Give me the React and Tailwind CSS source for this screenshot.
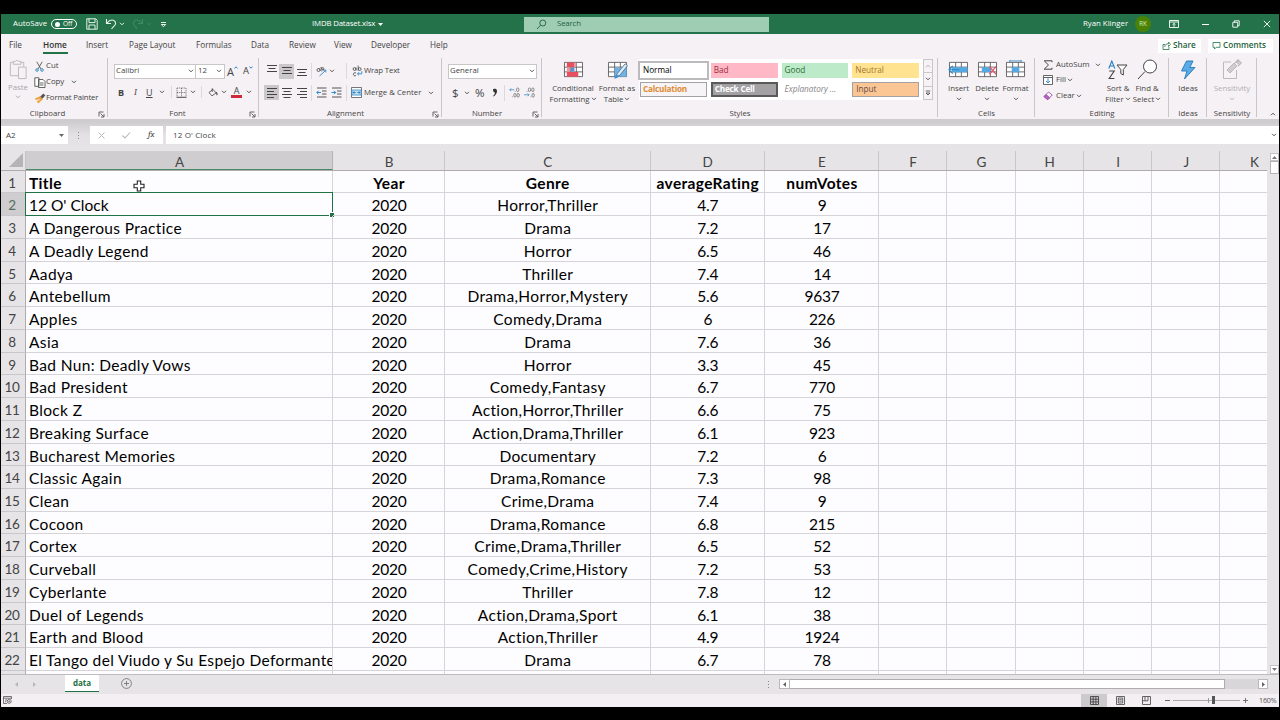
import React from 'react';

const ROWS = [
  ["12 O' Clock", 'Horror,Thriller', '4.7', '9'],
  ['A Dangerous Practice', 'Drama', '7.2', '17'],
  ['A Deadly Legend', 'Horror', '6.5', '46'],
  ['Aadya', 'Thriller', '7.4', '14'],
  ['Antebellum', 'Drama,Horror,Mystery', '5.6', '9637'],
  ['Apples', 'Comedy,Drama', '6', '226'],
  ['Asia', 'Drama', '7.6', '36'],
  ['Bad Nun: Deadly Vows', 'Horror', '3.3', '45'],
  ['Bad President', 'Comedy,Fantasy', '6.7', '770'],
  ['Block Z', 'Action,Horror,Thriller', '6.6', '75'],
  ['Breaking Surface', 'Action,Drama,Thriller', '6.1', '923'],
  ['Bucharest Memories', 'Documentary', '7.2', '6'],
  ['Classic Again', 'Drama,Romance', '7.3', '98'],
  ['Clean', 'Crime,Drama', '7.4', '9'],
  ['Cocoon', 'Drama,Romance', '6.8', '215'],
  ['Cortex', 'Crime,Drama,Thriller', '6.5', '52'],
  ['Curveball', 'Comedy,Crime,History', '7.2', '53'],
  ['Cyberlante', 'Thriller', '7.8', '12'],
  ['Duel of Legends', 'Action,Drama,Sport', '6.1', '38'],
  ['Earth and Blood', 'Action,Thriller', '4.9', '1924'],
  ['El Tango del Viudo y Su Espejo Deformante', 'Drama', '6.7', '78'],
];

const COLUMNS = ['A', 'B', 'C', 'D', 'E', 'F', 'G', 'H', 'I', 'J', 'K'];

// Row header + columns A..K, shared by the header and every row
const GRID = 'grid grid-rows-[minmax(0,1fr)] grid-cols-[25px_307px_112px_205.5px_114.5px_114px_68.3px_68.3px_68.3px_68.3px_68.2px_68px]';

const MENU = [
  { title: 'File', width: 'w-[34px]' },
  { title: 'Home', width: 'w-[43px]', active: true },
  { title: 'Insert', width: 'w-[43px]' },
  { title: 'Page Layout', width: 'w-[67px]' },
  { title: 'Formulas', width: 'w-[55px]' },
  { title: 'Data', width: 'w-[38px]' },
  { title: 'Review', width: 'w-[45px]' },
  { title: 'View', width: 'w-[37px]' },
  { title: 'Developer', width: 'w-[59px]' },
  { title: 'Help', width: 'w-[30px]' },
];

// --- Small shared drawings ---
const Chevron = ({ className = '' }) => (
  <svg viewBox="0 0 6 4" className={`h-[4px] w-[6px] shrink-0 ${className}`} fill="none" stroke="currentColor" strokeWidth="0.9">
    <path d="M1 0.8 3 2.8 5 0.8" />
  </svg>
);

const Launcher = () => (
  <svg viewBox="0 0 7 7" className="h-[7px] w-[7px]" fill="none" stroke="#555" strokeWidth="0.9">
    <path d="M1 5.5V1h4.5M2.6 2.6 5.8 5.8M6 3v3H3" />
  </svg>
);

const Group = ({ label, width, labelPad = '', launcher, border = true, children }) => (
  <div className={`relative flex h-full shrink-0 flex-col ${width}`}>
    <div className="h-[51px]">{children}</div>
    <div className={`flex h-[11px] items-center justify-center leading-none ${labelPad}`}>{label}</div>
    {launcher && <div className="absolute right-[3px] bottom-[1px]"><Launcher /></div>}
    {border && <div className="absolute top-[1px] right-0 h-[59px] w-px bg-[#c9c6c9]" />}
  </div>
);

const BigButton = ({ icon, first, second, width, className = '', arrow }) => (
  <div className={`flex shrink-0 flex-col items-center leading-[10.5px] whitespace-nowrap ${width} ${className}`}>
    <div className="flex h-[25px] items-center justify-center">{icon}</div>
    <div className="mt-[1px]">{first}</div>
    <div className="flex h-[10.5px] items-center gap-[1px]">{second}{arrow && <Chevron />}</div>
  </div>
);

const Lines = ({ xs, top = 0 }) => (
  <svg viewBox="0 0 12 12" className="h-[12px] w-[12px]" stroke="#444" strokeWidth="1">
    {xs.map(([a, b], i) => <path key={i} d={`M${a} ${top + 1.5 + i * 3}H${b}`} />)}
  </svg>
);

const TableIcon = ({ children }) => (
  <svg viewBox="0 0 22 20" className="h-[19px] w-[21px]" fill="none">
    <path d="M1.5 2.5h19v15h-19zM1.5 7.5h19M1.5 12.5h19M8 2.5v15M14 2.5v15" fill="#fff" stroke="#555" strokeWidth="0.9" />
    {children}
  </svg>
);

// --- Title bar ---
const TitleBar = () => (
  <div className="flex h-[20px] items-center bg-[#247249] text-[7.8px] text-white">
    <div className="ml-[12px] w-[38px]">AutoSave</div>
    <div className="flex h-[10px] w-[26px] items-center rounded-full border border-white pl-[3px] text-[6.5px] leading-none">
      <span className="mr-[3px] h-[5px] w-[5px] rounded-full bg-white" />Off
    </div>
    <svg viewBox="0 0 12 12" className="ml-[9px] h-[12px] w-[12px]" fill="none" stroke="#e4f2ea" strokeWidth="1">
      <path d="M.8.8h8.9l1.5 1.5v8.9H.8zM3 .8v3.8h6V.8M3 11V7h6v4" />
    </svg>
    <svg viewBox="0 0 12 12" className="ml-[7px] h-[12px] w-[12px]" fill="none" stroke="#e4f2ea" strokeWidth="1.1">
      <path d="M1.5 1v4.5H6M1.8 5.2C4 2.5 6 1.6 8.2 2.2c3.5 1.2 2.7 4.6.6 6.2L6.5 10.8" />
    </svg>
    <Chevron className="ml-[2px]" />
    <svg viewBox="0 0 12 12" className="ml-[7px] h-[12px] w-[12px]" fill="none" stroke="#3f8a62" strokeWidth="1.1">
      <path d="M10.5 1v4.5H6M10.2 5.2C8 2.5 6 1.6 3.8 2.2.3 3.4 1.1 6.800 3.2 8.400L5 10.800" />
    </svg>
    <Chevron className="ml-[2px] text-[#3f8a62]" />
    <svg viewBox="0 0 7 7" className="ml-[8px] h-[7px] w-[7px]" fill="none" stroke="#fff" strokeWidth="0.9">
      <path d="M1 1.5h5M1.3 3.5 3.5 5.7 5.7 3.5z" />
    </svg>
    <div className="ml-[145px] w-[66px] tracking-[-0.15px] whitespace-nowrap">IMDB Dataset.xlsx</div>
    <svg viewBox="0 0 5 3" className="h-[3px] w-[5px]" fill="#fff"><path d="M0 0h5L2.5 3z" /></svg>
    <div className="ml-[141px] flex h-[15px] w-[245px] items-center bg-[#9fcdb3] text-[#22613f]">
      <svg viewBox="0 0 11 11" className="ml-[12px] h-[11px] w-[11px]" fill="none" stroke="#22613f" strokeWidth="0.9">
        <circle cx="6.8" cy="4" r="3" /><path d="M4.6 6.2 1 10" />
      </svg>
      <span className="ml-[10px] tracking-[-0.15px]">Search</span>
    </div>
    <div className="ml-[314px] w-[52px] whitespace-nowrap">Ryan Klinger</div>
    <div className="flex h-[16px] w-[16px] items-center justify-center rounded-full bg-[#498205] text-[6.5px] text-[#d5e8b4]">RK</div>
    <svg viewBox="0 0 10 8" className="ml-[18px] h-[8px] w-[10px]" fill="none" stroke="#fff" strokeWidth="0.9">
      <path d="M.5.5h9v7h-9zM.5 2h9M5 6.8V3.5M3.5 4.8 5 3.4l1.5 1.4" />
    </svg>
    <div className="ml-[23px] h-px w-[7px] bg-white" />
    <svg viewBox="0 0 8 8" className="ml-[23px] h-[8px] w-[8px]" fill="none" stroke="#fff" strokeWidth="0.9">
      <path d="M.8 2.3h4.9v4.9H.8zM2.3 2.3V.8h4.9v4.9H5.7" />
    </svg>
    <svg viewBox="0 0 8 8" className="ml-[23px] h-[8px] w-[8px]" stroke="#fff" strokeWidth="0.9">
      <path d="m.8.8 6.4 6.4M7.2.8.8 7.2" />
    </svg>
  </div>
);

// --- Menu tabs ---
const MenuBar = () => (
  <div className="flex h-[23px] items-center text-[8.2px] text-[#444]">
    <div className="flex pl-[8px]">
      {MENU.map((item) => (
        <div key={item.title} className={`relative flex shrink-0 justify-start whitespace-nowrap ${item.width}`}>
          <span className={item.active ? 'font-semibold text-[#333]' : ''}>{item.title}</span>
          {item.active && <span className="absolute bottom-[-2px] left-0 h-[2px] w-[25px] bg-[#217346]" />}
        </div>
      ))}
    </div>
    <div className="ml-auto flex h-[14px] w-[43px] items-center gap-[2px] bg-white pl-[4px] font-semibold text-[#1f5f3c]">
      <svg viewBox="0 0 9 9" className="h-[9px] w-[9px]" fill="none" stroke="#217346" strokeWidth="0.8">
        <path d="M3 3.5H1v5h6V6M2.8 6c0-2.3 1.4-3.2 3.7-3.2V1l2 2.3-2 2.2V4" />
      </svg>
      Share
    </div>
    <div className="mr-[6px] ml-[7px] flex h-[14px] w-[65px] items-center gap-[2px] bg-white pl-[4px] font-semibold text-[#1f5f3c]">
      <svg viewBox="0 0 9 9" className="h-[9px] w-[9px]" fill="none" stroke="#217346" strokeWidth="0.8">
        <path d="M1 1.5h7v4.8H4.2L2.5 8V6.3H1z" />
      </svg>
      Comments
    </div>
  </div>
);

const ClipboardGroup = () => (
  <Group label="Clipboard" width="w-[107px]" labelPad="pr-[14px]" launcher>
    <div className="flex">
      <div className="mt-[2px] ml-[3px] flex w-[28px] shrink-0 flex-col items-center text-[#a9a6a9]">
        <svg viewBox="0 0 20 22" className="h-[21px] w-[20px]" fill="none" stroke="#bcb8bc" strokeWidth="1">
          <path d="M5 3.5H2v14h8M13 3.5h3V8M5 2.5h2.5a1.6 1.6 0 0 1 3 0H13v3H5zM10.5 8.5h8v12h-8z" />
        </svg>
        <span className="mt-[2px] leading-[11px]">Paste</span>
        <Chevron className="mt-[2px]" />
      </div>
      <div className="mt-[1px] ml-[2px] flex shrink-0 flex-col">
        <div className="flex h-[16px] items-center">
          <svg viewBox="0 0 9 11" className="ml-[1px] h-[11px] w-[9px]" fill="none" stroke="#555" strokeWidth="0.9">
            <path d="M1.8.8 6 8M7.2.8 3 8" /><circle cx="2" cy="9" r="1.3" stroke="#2b88c8" /><circle cx="7" cy="9" r="1.3" stroke="#2b88c8" />
          </svg>
          <span className="ml-[2px]">Cut</span>
        </div>
        <div className="flex h-[16px] items-center">
          <svg viewBox="0 0 12 11" className="h-[11px] w-[12px]" fill="#fff" stroke="#555" strokeWidth="0.9">
            <path d="M.8.8H5v8.5H.8zM4.5 2.5H9l2 2v6H4.5zM6 6h3.5M6 8h3.5" />
          </svg>
          <span className="w-[25px]">Copy</span><Chevron />
        </div>
        <div className="flex h-[16px] items-center">
          <svg viewBox="0 0 12 11" className="h-[11px] w-[12px]" fill="none">
            <path d="M.8 5.5 6.5 3l2.3 3.2-4.5 4.3z" fill="#eda445" /><path d="m6.3 3.6 3-3 2 2-3 3.2z" fill="#555" /><path d="m2 7.5 3.5-.8" stroke="#fff" />
          </svg>
          <span className="tracking-[-0.15px] whitespace-nowrap">Format Painter</span>
        </div>
      </div>
    </div>
  </Group>
);

const FontGroup = () => (
  <Group label="Font" width="w-[151px]" labelPad="pr-[12px]" launcher>
    <div className="flex h-[28px] items-center pl-[6px]">
      <div className="flex h-[15px] w-[82px] items-center justify-between border border-[#c8c6c8] bg-white px-[1px]">Calibri<Chevron /></div>
      <div className="flex h-[15px] w-[29px] items-center justify-between border border-l-0 border-[#c8c6c8] bg-white px-[2px]">12<Chevron /></div>
      <span className="ml-[2px] text-[11px] leading-none">A</span>
      <svg viewBox="0 0 4 3" className="mb-[7px] h-[3px] w-[4px]" fill="none" stroke="#2b88c8"><path d="M.4 2.5 2 .8l1.6 1.7" /></svg>
      <span className="ml-[5px] text-[9.5px] leading-none">A</span>
      <svg viewBox="0 0 4 3" className="mb-[7px] h-[3px] w-[4px]" fill="none" stroke="#2b88c8"><path d="M.4.5 2 2.2 3.6.5" /></svg>
    </div>
    <div className="flex h-[14px] items-center pl-[10px] text-[9px] leading-none">
      <b className="w-[15px] shrink-0">B</b>
      <i className="w-[13px] shrink-0 pl-px font-serif">I</i>
      <u className="w-[13px] shrink-0">U</u>
      <Chevron />
      <div className="ml-[6px] h-[12px] w-px bg-[#dcd9dc]" />
      <svg viewBox="0 0 11 11" className="ml-[4px] h-[11px] w-[11px] shrink-0" stroke="#555" strokeWidth="0.8" fill="none">
        <path d="M1 1h9M1 1v9M10 1v9M5.5 1v9M1 5.5h9" strokeDasharray="1.2 1" /><path d="M.5 10.3h10" strokeWidth="1.1" />
      </svg>
      <Chevron className="ml-[3px]" />
      <div className="ml-[5px] h-[12px] w-px bg-[#dcd9dc]" />
      <svg viewBox="0 0 10 11" className="ml-[6px] h-[11px] w-[10px] shrink-0" fill="none" stroke="#555" strokeWidth="0.9">
        <path d="m1 5.5 4-3.2 3 3.6-4 3zM4.2 5V1.2" /><path d="M8.2 5.2c1 1.6 1 2.5.3 2.8" strokeWidth="1.3" />
      </svg>
      <Chevron className="ml-[3px]" />
      <div className="ml-[4px] flex w-[11px] shrink-0 flex-col items-center leading-[9px]">A<span className="h-[2.5px] w-full bg-[#d1273a]" /></div>
      <Chevron className="ml-[4px]" />
    </div>
  </Group>
);

const Divider = ({ className }) => <div className={`h-[16px] w-px shrink-0 bg-[#dcd9dc] ${className}`} />;

const AlignmentGroup = () => (
  <Group label="Alignment" width="w-[183px]" labelPad="pr-[10px]" launcher>
    <div className="flex h-[28px] items-center pl-[5px]">
      <div className="flex h-[15px] w-[15px] items-center justify-center"><Lines top={-1} xs={[[1, 11], [2.5, 9.5], [1, 11]]} /></div>
      <div className="flex h-[15px] w-[15px] items-center justify-center bg-[#cbc8cb]"><Lines top={1} xs={[[1, 11], [2.5, 9.5], [1, 11]]} /></div>
      <div className="flex h-[15px] w-[15px] items-center justify-center"><Lines top={3} xs={[[1, 11], [2.5, 9.5], [1, 11]]} /></div>
      <Divider className="ml-[2px]" />
      <svg viewBox="0 0 11 11" className="ml-[4px] h-[11px] w-[11px]" fill="none" stroke="#555" strokeWidth="0.9">
        <circle cx="2.5" cy="4" r="1.5" /><path d="m2.5 2 3 3.4M4.5 1l3.2 3.5" /><circle cx="6.5" cy="2.8" r="1.3" /><path d="m3.5 10 6-5.5M7.5 4h2.3v2.4" stroke="#2b88c8" />
      </svg>
      <Chevron className="ml-[2px]" />
      <Divider className="ml-[11px]" />
      <svg viewBox="0 0 11 12" className="ml-[5px] h-[12px] w-[11px]" fill="none" stroke="#555" strokeWidth="0.9">
        <circle cx="2.5" cy="4" r="1.4" /><path d="M4 2.400v3.200M6.200.6v5" /><circle cx="7.700" cy="4.100" r="1.400" />
        <path d="M4 8a1.600 1.600 0 1 0 0 2.500" />
        <path d="M9.800 6.200v2.600H5.500M7 7.200 5.400 8.800 7 10.400" stroke="#2b88c8" />
      </svg>
      <span className="ml-[1px] tracking-[-0.15px] whitespace-nowrap">Wrap Text</span>
    </div>
    <div className="flex h-[15px] items-center pl-[5px]">
      <div className="flex h-[15px] w-[15px] items-center justify-center bg-[#cbc8cb]"><Lines xs={[[1, 11], [1, 8], [1, 11], [1, 8]]} /></div>
      <div className="flex h-[15px] w-[15px] items-center justify-center"><Lines xs={[[1, 11], [2.5, 9.5], [1, 11], [2.5, 9.5]]} /></div>
      <div className="flex h-[15px] w-[15px] items-center justify-center"><Lines xs={[[1, 11], [4, 11], [1, 11], [4, 11]]} /></div>
      <Divider className="ml-[2px]" />
      <svg viewBox="0 0 11 11" className="ml-[4px] h-[11px] w-[11px]" stroke="#555" fill="none">
        <path d="M1 1h9.5M6 4h4.5M6 7h4.5M1 10h9.5" /><path d="M5 5.5H.8M2.5 3.8.8 5.5l1.7 1.7" stroke="#2b88c8" />
      </svg>
      <svg viewBox="0 0 11 11" className="ml-[4px] h-[11px] w-[11px]" stroke="#555" fill="none">
        <path d="M1 1h9.5M6 4h4.5M6 7h4.5M1 10h9.5" /><path d="M.5 5.5h4.2M3 3.8l1.7 1.7L3 7.2" stroke="#2b88c8" />
      </svg>
      <Divider className="ml-[4px]" />
      <svg viewBox="0 0 11 11" className="ml-[4px] h-[11px] w-[11px]" fill="none" stroke="#555" strokeWidth="0.8">
        <path d="M.5.5h10v10H.5z" fill="#fff" /><path d="M.8 3h9.4v5H.8z" fill="#c4e1f3" stroke="#2b88c8" /><path d="M2 5.5h2.7M9 5.5H6.3M3.2 4.3 2 5.5l1.2 1.2M7.8 4.3 9 5.5 7.8 6.7" stroke="#1f6fa8" />
      </svg>
      <span className="ml-[2px] w-[64px] whitespace-nowrap">Merge & Center</span>
      <Chevron />
    </div>
  </Group>
);

const NumberGroup = () => (
  <Group label="Number" width="w-[100px]" labelPad="pr-[10px]" launcher>
    <div className="flex h-[28px] items-center pl-[6px]">
      <div className="flex h-[15px] w-[89px] shrink-0 items-center justify-between border border-[#c8c6c8] bg-white px-[1px]">General<Chevron /></div>
    </div>
    <div className="flex h-[15px] items-center pl-[10px] text-[11.5px] leading-none">
      <span className="w-[12px] shrink-0">$</span>
      <Chevron />
      <span className="ml-[5px] w-[17px] shrink-0">%</span>
      <svg viewBox="0 0 6 9" className="h-[9px] w-[6px] shrink-0" fill="#333"><path d="M1 1.8C1 .5 4.8.2 5 2.6c.2 2.6-1.5 5-3.5 6l-.4-.6C2.4 7 3 5.8 2.9 4.6 1.8 4.5 1 3.4 1 1.8z" /></svg>
      <Divider className="ml-[6px]" />
      <svg viewBox="0 0 12 12" className="ml-[4px] h-[11px] w-[11px] shrink-0" fill="none" stroke="#666" strokeWidth="0.8">
        <ellipse cx="9.500" cy="3" rx="1.300" ry="2" /><ellipse cx="6.500" cy="9" rx="1.300" ry="2" /><ellipse cx="10" cy="9" rx="1.300" ry="2" />
        <path d="M6.800 4.500v.8M3.700 10.300v.8" /><path d="M5.800 3H.8M2.300 1.500.8 3l1.500 1.500" stroke="#2b88c8" />
      </svg>
      <svg viewBox="0 0 12 12" className="ml-[4px] h-[11px] w-[11px] shrink-0" fill="none" stroke="#666" strokeWidth="0.8">
        <ellipse cx="6" cy="3" rx="1.300" ry="2" /><ellipse cx="9.700" cy="3" rx="1.300" ry="2" /><ellipse cx="10" cy="9" rx="1.300" ry="2" />
        <path d="M3.300 4.500v.8M7.500 10.300v.8" /><path d="M0 8.500h5.500M4 7l1.500 1.500L4 10" stroke="#2b88c8" />
      </svg>
    </div>
  </Group>
);

const STYLE_CELLS = [
  ['Normal', 'outline outline-2 outline-[#bcbabc] bg-white text-black'],
  ['Bad', 'bg-[#ffb9c6] text-[#9c2a3a]'],
  ['Good', 'bg-[#bdebca] text-[#2b6b33]'],
  ['Neutral', 'bg-[#ffe391] text-[#a5762c]'],
  ['Calculation', 'border border-[#a3a1a3] bg-[#f6f4f6] font-bold tracking-[-0.200px] text-[#e08a32] -indent-px'],
  ['Check Cell', 'border-2 border-[#5a5a5a] bg-[#a3a1a3] font-bold tracking-[-0.200px] text-white -indent-px'],
  ['Explanatory ...', 'italic text-[#868386]'],
  ['Input', 'border border-[#a3a1a3] bg-[#fcc594] text-[#5c504a]'],
];

const StylesGroup = () => (
  <Group label="Styles" width="w-[396px]">
    <div className="flex">
      <BigButton
        width="w-[44px]" className="ml-[9px]" first="Conditional" second="Formatting" arrow
        icon={
          <TableIcon>
            <path d="M4 2.500h8v5H4zM4 12.500h12v5H4z" fill="#e8505f" /><path d="M4 8h4v4H4zM12 3h2v4h-2z" fill="#f2929c" /><path d="M8 8h4v4H8z" fill="#5b8fd0" />
          </TableIcon>
        }
      />
      <BigButton
        width="w-[42px]" className="ml-[1px]" first="Format as" second="Table" arrow
        icon={
          <TableIcon>
            <path d="M8 8h12.5v9.500H8z" fill="#6db3ea" /><path d="m9 18 2-4 8-10 2.500 2-8 10z" fill="#dcebf7" stroke="#4d6478" strokeWidth="0.8" /><path d="M7.500 19.500c1-3 2.500-4.500 4.500-3.500.5 2-1.500 3.500-4.500 3.500z" fill="#3c93d6" />
          </TableIcon>
        }
      />
      <div className="mt-[2px] ml-[1px] grid h-[41px] w-[284px] shrink-0 grid-cols-4 content-start gap-[4px] bg-white pt-[4px] pr-[4px] pl-[1px]">
        {STYLE_CELLS.map(([name, style]) => (
          <div key={name} className={`flex h-[15px] items-center overflow-hidden text-[8.200px] whitespace-nowrap ${style}`}>
            <span className="pl-[3px]">{name}</span>
          </div>
        ))}
      </div>
      <div className="mt-[2px] flex h-[41px] w-[10px] shrink-0 flex-col divide-y divide-[#c8c6c8] border border-[#c8c6c8] bg-[#f6f2f5]">
        <div className="flex flex-1 items-center justify-center text-[#aaa]"><Chevron className="rotate-180" /></div>
        <div className="flex flex-1 items-center justify-center"><Chevron /></div>
        <div className="flex flex-1 items-center justify-center">
          <svg viewBox="0 0 6 6" className="h-[6px] w-[6px]" fill="none" stroke="#555" strokeWidth="0.9"><path d="M.8 1h4.400M1 3l2 2 2-2z" /></svg>
        </div>
      </div>
    </div>
  </Group>
);

const CellsGroup = () => (
  <Group label="Cells" width="w-[97px]">
    <div className="flex pl-[6px]">
      <BigButton width="w-[29px]" first="Insert" arrow
        icon={<TableIcon><path d="M4 7.500h16.500v5.500H4z" fill="#56a8e2" /><path d="M12 10.300H1M5 6.300l-4 4 4 4" stroke="#2b88c8" strokeWidth="1.200" /></TableIcon>} />
      <BigButton width="w-[28px]" first="Delete" arrow
        icon={<TableIcon><path d="M5 7.500h9v5.500H5z" fill="#56a8e2" /><path d="m13 7 7 8M20 7l-7 8" stroke="#e0566a" strokeWidth="1.300" /></TableIcon>} />
      <BigButton width="w-[29px]" first="Format" arrow
        icon={<TableIcon><path d="M7 7.500h8v5.500H7z" fill="#56a8e2" /><path d="M5 1h12M5 0v2M17 0v2" stroke="#2b88c8" strokeWidth="0.900" /></TableIcon>} />
    </div>
  </Group>
);

const EditingGroup = () => (
  <Group label="Editing" width="w-[134px]">
    <div className="flex pl-[8px]">
      <div className="flex w-[60px] shrink-0 flex-col">
        <div className="flex h-[15.500px] items-center">
          <svg viewBox="0 0 10 10" className="h-[10px] w-[10px]" fill="none" stroke="#444"><path d="M9 2.200V.8H1.200L5.500 5 1.200 9.200H9V7.800" /></svg>
          <span className="ml-[3px] w-[39px]">AutoSum</span><Chevron />
        </div>
        <div className="flex h-[15.500px] items-center">
          <svg viewBox="0 0 10 10" className="h-[10px] w-[10px]" fill="#fff" stroke="#555" strokeWidth="0.900"><path d="M.5.5h9v9h-9zM.5 2.500h9" /><path d="M5 3v5M3 6l2 2 2-2" fill="none" stroke="#2b88c8" /></svg>
          <span className="ml-[3px] w-[11px]">Fill</span><Chevron />
        </div>
        <div className="flex h-[15.500px] items-center">
          <svg viewBox="0 0 10 10" className="h-[10px] w-[10px]" fill="#fff" stroke="#a04cad" strokeWidth="0.900"><path d="m1 5.500 4.500-4.500 3.700 3L4.700 8.700z" /><path d="m1 5.500 2-2 3.700 3.200-2 2z" fill="#b563c2" /></svg>
          <span className="ml-[3px] w-[20px]">Clear</span><Chevron />
        </div>
      </div>
      <BigButton width="w-[28px]" first="Sort &" second="Filter" arrow className="ml-[1px]"
        icon={
          <svg viewBox="0 0 20 20" className="h-[20px] w-[20px]" fill="none">
            <path d="m.8 8.500 3-7.500 3 7.500M1.800 6h4" stroke="#2b7fc0" strokeWidth="1.100" />
            <path d="M1.200 11h5l-5 7.500h5.200" stroke="#444" strokeWidth="1.100" />
            <path d="M9 5h10l-3.700 4.500V15l-2.500-1.500V9.500z" stroke="#444" fill="#fff" />
          </svg>
        } />
      <BigButton width="w-[30px]" first="Find &" second="Select" arrow
        icon={
          <svg viewBox="0 0 21 21" className="h-[21px] w-[21px]" fill="#fff" stroke="#444" strokeWidth="1"><path d="M8 12.500 1 20" /><circle cx="13" cy="7.500" r="6.500" /></svg>
        } />
    </div>
  </Group>
);

const Ribbon = () => (
  <div className="flex h-[62px] text-[7.800px] leading-none text-[#444]">
    <ClipboardGroup />
    <FontGroup />
    <AlignmentGroup />
    <NumberGroup />
    <StylesGroup />
    <CellsGroup />
    <EditingGroup />
    <Group label="Ideas" width="w-[38px]">
      <BigButton width="w-full" first="Ideas"
        icon={<svg viewBox="0 0 16 20" className="h-[20px] w-[16px]" fill="#5aace6" stroke="#2576b5" strokeWidth="0.900"><path d="M6.500 1H13L9.800 7.500H15L4.500 19l2.500-8H1.500z" /></svg>} />
    </Group>
    <Group label="Sensitivity" width="w-[50px]">
      <BigButton width="w-full" className="text-[#b1aeb1]" first="Sensitivity" arrow
        icon={
          <svg viewBox="0 0 20 21" className="h-[21px] w-[20px]" fill="none" stroke="#bcb9bc">
            <path d="M9 3H1.500v16.500h13V11" /><path d="m5 11 7-7 3 3-7 7z" fill="#cfcccf" /><path d="m13 4 3-3 3 3-3 3M14.500 2.500l3 3" strokeWidth="1.500" />
          </svg>
        } />
    </Group>
    <div className="flex flex-1 items-end justify-end pr-[3px] pb-[3px]"><Chevron className="rotate-180" /></div>
  </div>
);

const FormulaBar = () => (
  <div className="flex h-[26px] items-center bg-gradient-to-b from-[#d0cdd0] via-[#e3e1e4] to-[#e6e4e7] text-[8px] text-[#444]">
    <div className="flex h-[18px] w-[67px] items-center justify-between bg-white pr-[4px] pl-[5px]">
      A2
      <svg viewBox="0 0 5 3" className="h-[3px] w-[5px]" fill="#666"><path d="M0 0h5L2.500 3z" /></svg>
    </div>
    <div className="ml-[10px] flex flex-col gap-[2px]">
      {[0, 1, 2].map((n) => <span key={n} className="h-px w-px bg-[#888]" />)}
    </div>
    <div className="ml-[11px] flex h-[18px] w-[73px] items-center bg-white">
      <svg viewBox="0 0 7 7" className="ml-[8px] h-[7px] w-[7px]" stroke="#b9b6b9" strokeWidth="1"><path d="m.5.500 6 6M6.500.500l-6 6" /></svg>
      <svg viewBox="0 0 9 7" className="ml-[17px] h-[7px] w-[9px]" fill="none" stroke="#b9b6b9" strokeWidth="1.100"><path d="m.500 3.500 2.500 2.500 5-5.500" /></svg>
      <span className="ml-[17px] font-serif text-[9px] italic">fx</span>
    </div>
    <div className="ml-[3px] flex h-[18px] flex-1 items-center justify-between bg-white pr-[2px] pl-[7px]">
      <span className="tracking-[0.150px]">12 O' Clock</span>
      <Chevron />
    </div>
  </div>
);

// --- Sheet ---
const Sheet = () => (
  <div className="flex h-[523px] bg-[#e6e4e7]">
    <div className="w-[1266px] overflow-hidden font-['Lato','Liberation_Sans',sans-serif]">
      <div className={`h-[19.700px] border-b border-[#aeacae] text-[13.500px] leading-[22px] text-[#444] ${GRID}`}>
        <div className="flex items-end justify-end border-r border-[#c4c2c4] pr-[2px] pb-[3px]">
          <svg viewBox="0 0 14 14" className="h-[14px] w-[14px]" fill="#b5b3b5"><path d="M14 0v14H0z" /></svg>
        </div>
        {COLUMNS.map((c) => (
          <div key={c} className={`border-r pl-px text-center ${c === 'A' ? 'border-[#b5b3b5] border-b border-b-[#4a8a66] bg-[#cfcdd0]' : 'border-[#c9c7ca]'}`}>{c}</div>
        ))}
      </div>
      <div className="h-[503.300px] overflow-hidden bg-[#fdfcfe] text-[15.500px] text-black">
        <Row n={1} cells={['Title', 'Year', 'Genre', 'averageRating', 'numVotes']} bold />
        {ROWS.map(([title, genre, rating, votes], i) => (
          <Row key={title} n={i + 2} cells={[title, '2020', genre, rating, votes]} selected={i === 0} />
        ))}
        <Row n="" cells={[]} />
      </div>
    </div>
    <div className="flex flex-1 flex-col items-end justify-between">
      <div className="mt-[2px] w-[9px]">
        <div className="flex h-[8px] items-center justify-center border border-[#c4c2c4] bg-white">
          <svg viewBox="0 0 5 3" className="h-[3px] w-[5px]" fill="#777"><path d="M0 3h5L2.500 0z" /></svg>
        </div>
        <div className="h-[13px] border border-[#b5b3b5] bg-white" />
      </div>
      <div className="flex h-[9px] w-[9px] items-center justify-center border border-[#c4c2c4] bg-white">
        <svg viewBox="0 0 5 3" className="h-[3px] w-[5px]" fill="#777"><path d="M0 0h5L2.500 3z" /></svg>
      </div>
    </div>
  </div>
);

const CellCursor = () => (
  <svg viewBox="0 0 12 12" className="absolute top-[9px] left-[107px] h-[12px] w-[12px]" fill="#fff" stroke="#222" strokeWidth="1.1">
    <path d="M4.300 1h3.400v3.300H11v3.400H7.700V11H4.300V7.700H1V4.300h3.300z" />
  </svg>
);

// Text is spaced a little wider than the figures
const spacing = (text, selected) => {
  if (!text || selected) return '';
  return /^[\d.]+$/.test(text) ? 'tracking-[-0.250px]' : 'tracking-[0.350px]';
};

const Row = ({ n, cells, bold, selected }) => (
  <div className={`h-[22.740px] leading-[24.500px] ${GRID} ${bold ? 'font-bold' : ''}`}>
    <div className={`border-r border-b border-r-[#aeacae] border-b-[#c9c7ca] pr-[2px] text-center text-[13.500px] font-normal tracking-[-0.300px] ${selected ? 'bg-[#cfcdd0] text-[#55705f]' : 'bg-[#e6e4e7] text-[#444]'}`}>{n}</div>
    {COLUMNS.map((c, i) => (
      <div key={c} className={`relative border-r border-b border-[#d6d4d8] whitespace-nowrap ${i === 0 ? 'pl-[3px]' : 'pl-px text-center'}`}>
        <div className={`h-full overflow-hidden ${spacing(cells[i], selected && i === 0)}`}>{cells[i]}</div>
        {bold && i === 0 && <CellCursor />}
        {selected && i === 0 && (
          <div className="absolute -top-px -right-px -bottom-px -left-px border border-[#217346]">
            <span className="absolute -right-[2px] -bottom-[2px] h-[4px] w-[4px] bg-[#217346] outline outline-1 outline-white" />
          </div>
        )}
      </div>
    ))}
  </div>
);

const SheetTabs = () => (
  <div className="flex h-[20px] items-start border-t border-[#bdbbbd] bg-[#e6e4e7] text-[8px]">
    <div className="flex h-full w-[64px] items-center gap-[15px] pl-[14px] text-[#b9b6b9]">
      <svg viewBox="0 0 3 5" className="h-[5px] w-[3px]" fill="currentColor"><path d="M3 0v5L0 2.500z" /></svg>
      <svg viewBox="0 0 3 5" className="h-[5px] w-[3px]" fill="currentColor"><path d="M0 0v5l3-2.500z" /></svg>
    </div>
    <div className="flex h-[17px] w-[34px] items-center justify-center border-b-[1.500px] border-[#217346] bg-white font-bold text-[#217346]">data</div>
    <svg viewBox="0 0 11 11" className="mt-[3px] ml-[22px] h-[11px] w-[11px]" fill="none" stroke="#777" strokeWidth="0.900">
      <circle cx="5.500" cy="5.500" r="4.900" /><path d="M3 5.500h5M5.500 3v5" />
    </svg>
    <div className="mt-[6px] ml-[636px] flex flex-col gap-[2px]">
      {[0, 1, 2].map((n) => <span key={n} className="h-px w-px bg-[#888]" />)}
    </div>
    <div className="mt-[4px] ml-[10px] flex h-[10px] w-[489px] bg-[#d8d6d9]">
      <div className="flex w-[11px] items-center justify-center border border-[#b9b7b9] bg-white">
        <svg viewBox="0 0 3 5" className="h-[5px] w-[3px]" fill="#666"><path d="M3 0v5L0 2.500z" /></svg>
      </div>
      <div className="w-[435px] border border-l-0 border-[#aeacae] bg-white" />
      <div className="ml-auto flex w-[10px] items-center justify-center border border-[#b9b7b9] bg-white">
        <svg viewBox="0 0 3 5" className="h-[5px] w-[3px]" fill="#666"><path d="M0 0v5l3-2.500z" /></svg>
      </div>
    </div>
  </div>
);

const StatusBar = () => (
  <div className="flex h-[12.500px] items-center bg-[#f4eff3] text-[7.200px] text-[#555]">
    <svg viewBox="0 0 9 8" className="ml-[2px] h-[8px] w-[9px]" fill="none" stroke="#555" strokeWidth="0.800">
      <path d="M8.500 3V.5h-8v7H4M.5 2.200h8M2 4h2M2 5.800h1" /><circle cx="6.200" cy="5.300" r="2" /><circle cx="6.200" cy="5.300" r=".5" />
    </svg>
    <div className="ml-auto flex h-full w-[26px] items-center justify-center bg-[#cdcacd]">
      <svg viewBox="0 0 9 9" className="h-[9px] w-[9px]" fill="none" stroke="#444" strokeWidth="0.900"><path d="M.5.500h8v8h-8zM.5 3.200h8M.5 5.900h8M3.200.500v8M5.900.500v8" /></svg>
    </div>
    <svg viewBox="0 0 9 9" className="ml-[9px] h-[9px] w-[9px]" fill="none" stroke="#555" strokeWidth="0.900"><path d="M.5.500h8v8h-8zM2.300 2h4.400v5H2.300zM3.300 3.700h2.400M3.300 5.200h2.400" /></svg>
    <svg viewBox="0 0 9 9" className="ml-[17px] h-[9px] w-[9px]" fill="none" stroke="#555" strokeWidth="0.900"><path d="M.5.500h8v8h-8zM3 .500v4.300M.5 4.800h5.500V.500" /></svg>
    <div className="ml-[14px] h-px w-[5px] bg-[#666]" />
    <div className="ml-[3px] flex w-[67px] items-center">
      <div className="h-px w-[35px] bg-[#aaa8aa]" />
      <div className="h-[5px] w-px bg-[#999]" />
      <div className="h-px w-[3px] bg-[#aaa8aa]" />
      <div className="h-[8px] w-[3px] bg-[#555]" />
      <div className="h-px flex-1 bg-[#aaa8aa]" />
    </div>
    <svg viewBox="0 0 5 5" className="ml-[3px] h-[5px] w-[5px]" stroke="#666" strokeWidth="0.900"><path d="M0 2.500h5M2.500 0v5" /></svg>
    <span className="mr-[3px] ml-[11px] w-[17px] tracking-[-0.200px] whitespace-nowrap">160%</span>
  </div>
);

export default function App() {
  return (
    <div className="h-[720px] w-[1280px] overflow-hidden bg-black pt-[14px] font-['Open_Sans','Noto_Sans',sans-serif]">
      <div className="ml-px w-[1278px] overflow-hidden bg-[#f5f1f4]">
        <TitleBar />
        <MenuBar />
        <Ribbon />
        <div className="h-[3px] bg-[#cfccd0]" />
        <FormulaBar />
        <div className="h-[3px] bg-[#e6e4e7]" />
        <Sheet />
        <SheetTabs />
        <StatusBar />
      </div>
    </div>
  );
}
